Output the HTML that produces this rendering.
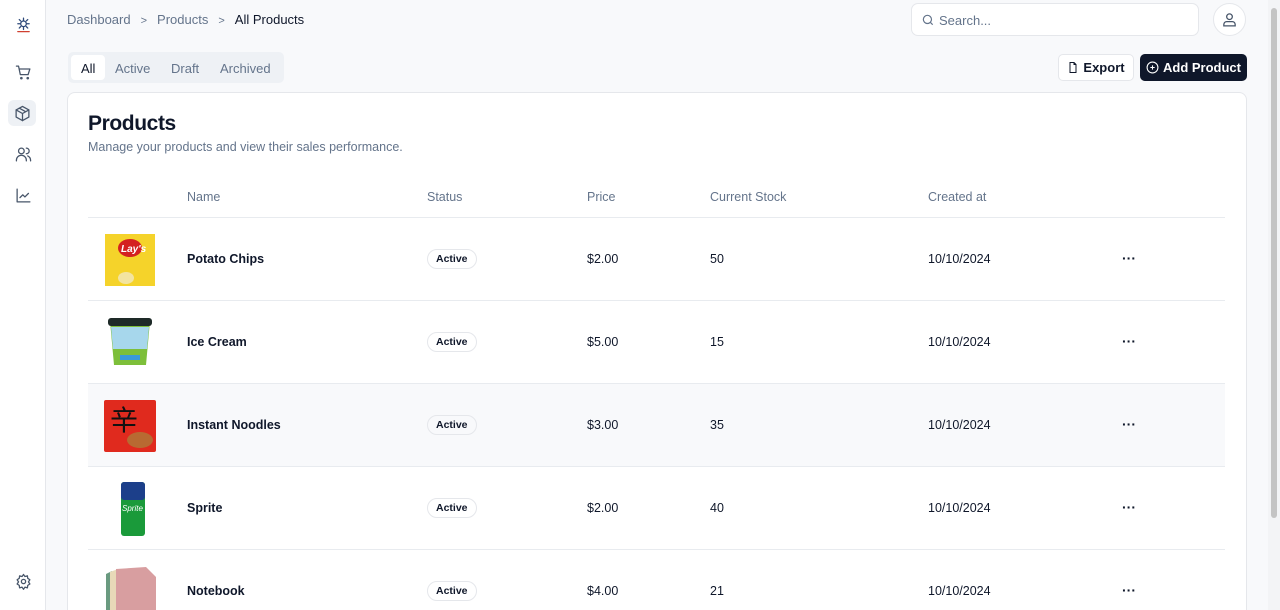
<!DOCTYPE html>
<html style="width:1280px;height:610px;overflow:hidden"><head><style>
*{box-sizing:border-box;margin:0;padding:0}
body{width:1280px;height:610px;overflow:hidden;background:#f8f9fb;font-family:"Liberation Sans",sans-serif;position:relative;color:#0f172a}
.side{position:absolute;left:0;top:0;width:46px;height:610px;background:#fff;border-right:1px solid #e5e7eb}
.ic{position:absolute;left:11px;width:24px;height:24px;display:flex;align-items:center;justify-content:center}
.ic svg{width:17px;height:17px;stroke:#475569;fill:none;stroke-width:1.8;stroke-linecap:round;stroke-linejoin:round}
.crumb{position:absolute;left:67px;top:12px;font-size:13px;color:#64748b}
.crumb b{font-weight:normal;color:#0f172a}
.crumb span{margin:0 10px;font-size:11px}
.search{position:absolute;left:911px;top:3px;width:288px;height:33px;background:#fff;border:1px solid #e5e7eb;border-radius:7px;font-size:13px;color:#64748b;padding:9px 0 0 27px}
.user{position:absolute;left:1213px;top:3px;width:33px;height:33px;border-radius:50%;border:1px solid #e5e7eb;background:#fff;display:flex;align-items:center;justify-content:center}
.tabs{position:absolute;left:68px;top:52px;width:216px;height:31px;background:#eef1f5;border-radius:5px;font-size:13px;color:#64748b}
.tabs div{position:absolute;top:9px}
.tabs .on{left:3px;top:3px;width:34px;height:25px;background:#fff;border-radius:4px;color:#0f172a;padding:6px 0 0 10px}
.btn{position:absolute;top:54px;height:27px;border-radius:5px;font-size:13px;font-weight:bold;display:flex;align-items:center;gap:4px;justify-content:center}
.card{position:absolute;left:67px;top:92px;width:1180px;height:518px;background:#fff;border:1px solid #e5e7eb;border-bottom:none;border-radius:8px 8px 0 0}
h1{position:absolute;left:88px;top:112px;font-size:21px;letter-spacing:-.4px}
.sub{position:absolute;left:88px;top:140px;font-size:12.5px;color:#64748b}
.th{position:absolute;top:190px;font-size:12.5px;color:#64748b}
.row{position:absolute;left:88px;width:1137px;height:83px;border-top:1px solid #e8ebef}
.row div{position:absolute;top:34px;font-size:12.5px}
.row .n{left:99px;font-weight:bold}
.badge{left:339px!important;top:31px!important;border:1px solid #e5e7eb;border-radius:10px;padding:3px 8px;font-size:10.5px!important;font-weight:bold}
.img{position:absolute;left:16px;top:14px;width:52px;height:55px}
.dots{left:1034px!important;font-weight:bold;top:32px!important;font-size:14px!important}
.sb{position:absolute;left:1268px;top:0;width:12px;height:610px;background:#f3f4f6}
.sb div{position:absolute;left:3px;top:8px;width:6px;height:510px;background:#c4c4c4;border-radius:3px}
</style></head><body>
<div class="side">
 <div class="ic" style="top:12px"><svg viewBox="0 0 24 24" style="stroke:#2f4a7a"><circle cx="12" cy="11" r="4"/><path d="M12 3v3M12 16v3M4 11h3M17 11h3M6 5l2 2M16 15l2 2M18 5l-2 2M6 17l2-2"/><path d="M4 22h16" style="stroke:#d04030"/></svg></div>
 <div class="ic" style="top:60px"><svg viewBox="0 0 24 24"><path d="M2 3h3l2.5 12h11L21 7H6"/><circle cx="9" cy="20" r="1"/><circle cx="18" cy="20" r="1"/></svg></div>
 <div class="ic" style="top:100px;left:8px;width:28px;height:26px;background:#eef1f5;border-radius:6px"><svg viewBox="0 0 24 24"><path d="M12 2l9 5v10l-9 5-9-5V7z"/><path d="M3 7l9 5 9-5M12 12v10M7.5 4.5l9 5"/></svg></div>
 <div class="ic" style="top:142px"><svg viewBox="0 0 24 24"><circle cx="9" cy="7" r="4"/><path d="M2 21v-1a7 7 0 0114 0v1M16 3a4 4 0 010 8M22 21v-1a7 7 0 00-4-6"/></svg></div>
 <div class="ic" style="top:183px"><svg viewBox="0 0 24 24"><path d="M3 3v18h18"/><path d="M7 15l4-4 3 3 5-5"/></svg></div>
 <div class="ic" style="top:569px"><svg viewBox="0 0 24 24"><circle cx="12" cy="12" r="3"/><path d="M12 2l2 3 3.5-1 .5 3.5 3 2-2 3 2 3-3 2-.5 3.5-3.5-1-2 3-2-3-3.5 1L6 17.5l-3-2 2-3-2-3 3-2L6.5 4 10 5z"/></svg></div>
</div>
<div class="crumb">Dashboard<span>&gt;</span>Products<span>&gt;</span><b>All Products</b></div>
<div class="search"><svg style="position:absolute;left:9px;top:9px" width="14" height="14" viewBox="0 0 24 24" fill="none" stroke="#64748b" stroke-width="2"><circle cx="11" cy="11" r="7"/><path d="M20 20l-4-4"/></svg>Search...</div>
<div class="user"><svg width="17" height="17" viewBox="0 0 24 24" fill="none" stroke="#475569" stroke-width="1.8"><circle cx="12" cy="8" r="4"/><path d="M4 21v-2a4 4 0 014-4h8a4 4 0 014 4v2z"/></svg></div>
<div class="tabs"><div class="on">All</div><div style="left:47px">Active</div><div style="left:103px">Draft</div><div style="left:152px">Archived</div></div>
<div class="btn" style="left:1058px;width:76px;background:#fff;border:1px solid #e5e7eb"><svg width="12" height="13" viewBox="0 0 24 24" fill="none" stroke="#0f172a" stroke-width="2"><path d="M14 2H6v20h12V6z M14 2v4h4"/></svg>Export</div>
<div class="btn" style="left:1140px;width:107px;background:#0f172a;color:#fff"><svg width="13" height="13" viewBox="0 0 24 24" fill="none" stroke="#fff" stroke-width="2"><circle cx="12" cy="12" r="10"/><path d="M12 8v8M8 12h8"/></svg>Add Product</div>
<div class="card"></div>
<h1>Products</h1>
<div class="sub">Manage your products and view their sales performance.</div>
<div class="th" style="left:187px">Name</div><div class="th" style="left:427px">Status</div><div class="th" style="left:587px">Price</div><div class="th" style="left:710px">Current Stock</div><div class="th" style="left:928px">Created at</div>

<div class="row" style="top:217px"><svg class="img" viewBox="0 0 52 55"><rect x="1" y="2" width="50" height="52" fill="#f5d32a"/><ellipse cx="26" cy="16" rx="12" ry="9" fill="#d42020"/><text x="17" y="20" font-size="10" fill="#fff" font-style="italic" font-weight="bold">Lay's</text><ellipse cx="22" cy="46" rx="8" ry="6" fill="#f3e4a0"/></svg><div class="n">Potato Chips</div><div class="badge">Active</div><div style="left:499px">$2.00</div><div style="left:622px">50</div><div style="left:840px">10/10/2024</div><div class="dots">···</div></div>
<div class="row" style="top:300px"><svg class="img" viewBox="0 0 52 55"><path d="M6 6h40l-4 44H10z" fill="#7dbf3a"/><rect x="4" y="3" width="44" height="8" rx="3" fill="#1e2a28"/><path d="M7 12h38l-2 22H9z" fill="#a7d7ec"/><rect x="16" y="40" width="20" height="5" fill="#3a9ad9"/></svg><div class="n">Ice Cream</div><div class="badge">Active</div><div style="left:499px">$5.00</div><div style="left:622px">15</div><div style="left:840px">10/10/2024</div><div class="dots">···</div></div>
<div class="row" style="top:383px;background:#f8f9fb"><svg class="img" viewBox="0 0 52 55"><rect x="0" y="2" width="52" height="52" rx="2" fill="#e02a1e"/><text x="6" y="32" font-size="28" fill="#111" font-family="Noto Sans CJK SC">辛</text><ellipse cx="36" cy="42" rx="13" ry="8" fill="#b86a32"/></svg><div class="n">Instant Noodles</div><div class="badge">Active</div><div style="left:499px">$3.00</div><div style="left:622px">35</div><div style="left:840px">10/10/2024</div><div class="dots">···</div></div>
<div class="row" style="top:466px"><svg class="img" viewBox="0 0 52 55"><rect x="17" y="1" width="24" height="54" rx="3" fill="#1a9a3a"/><rect x="17" y="1" width="24" height="18" rx="3" fill="#1c3f8a"/><text x="18" y="30" font-size="8" fill="#fff" font-style="italic">Sprite</text></svg><div class="n">Sprite</div><div class="badge">Active</div><div style="left:499px">$2.00</div><div style="left:622px">40</div><div style="left:840px">10/10/2024</div><div class="dots">···</div></div>
<div class="row" style="top:549px;height:61px"><svg class="img" viewBox="0 0 52 55"><path d="M2 10l6-3v48H2z" fill="#6a9a80"/><path d="M6 8l8-3v50H6z" fill="#e8d9b8"/><path d="M12 5l30-2 12 12v40H12z" fill="#d89ea0"/></svg><div class="n">Notebook</div><div class="badge">Active</div><div style="left:499px">$4.00</div><div style="left:622px">21</div><div style="left:840px">10/10/2024</div><div class="dots">···</div></div>
<div class="sb"><div></div></div>
</body></html>
